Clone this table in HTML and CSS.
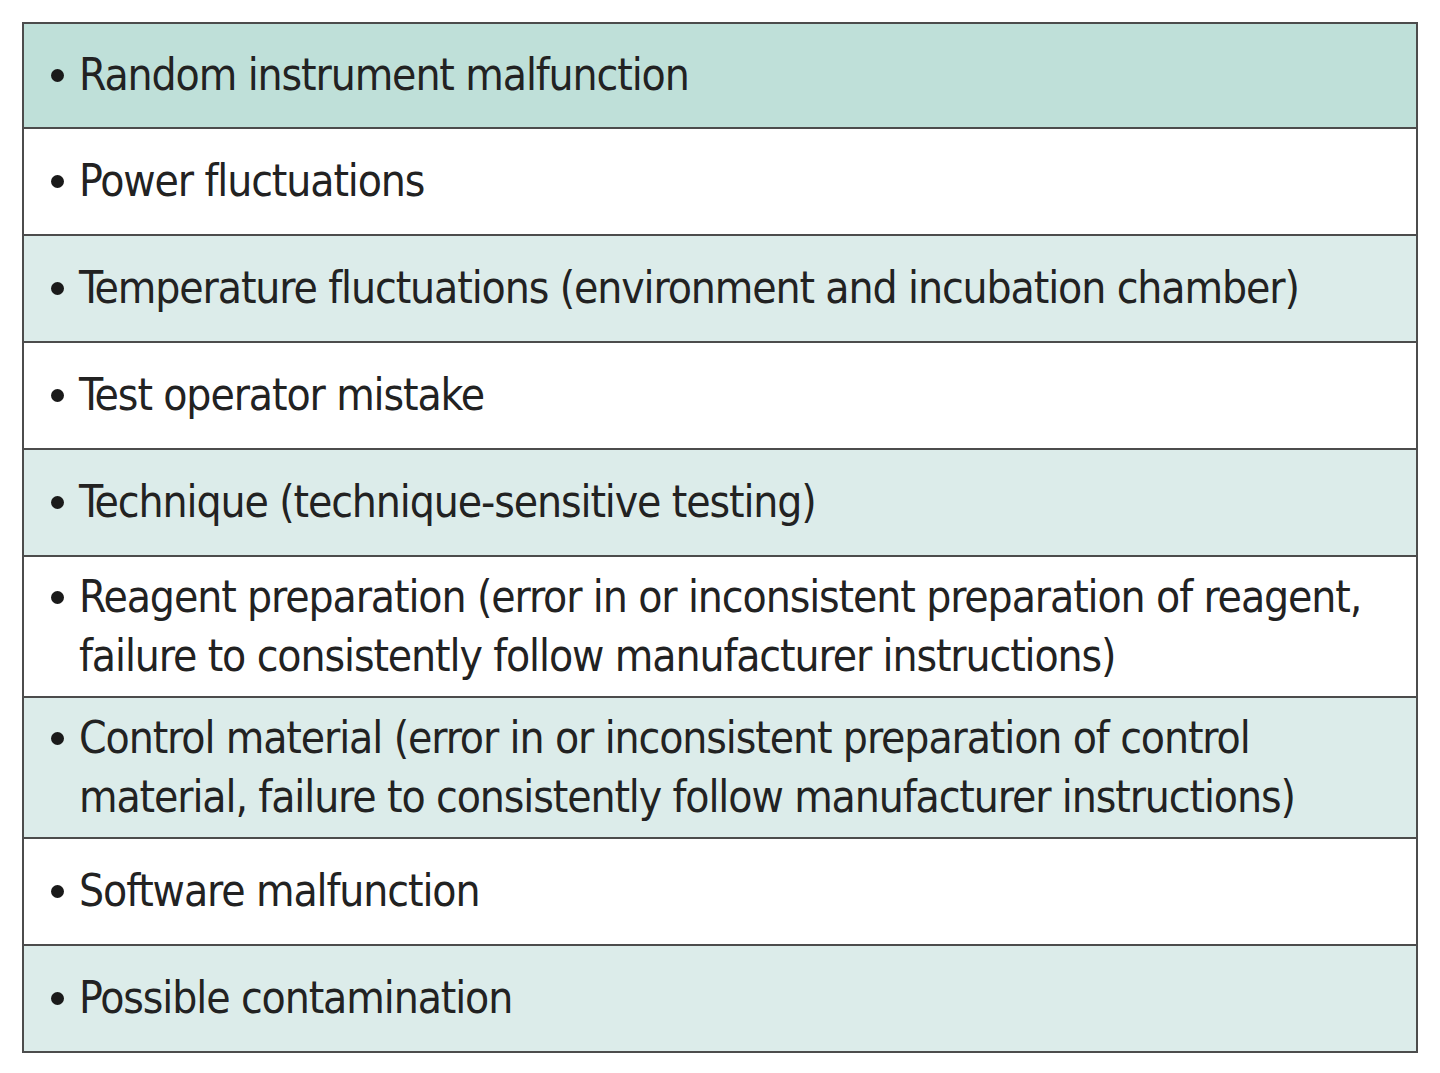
FILE: index.html
```html
<!DOCTYPE html>
<html lang="en">
<head>
<meta charset="utf-8">
<title>Sources of error</title>
<link rel="stylesheet" href="styles.css">
</head>
<body>
<div class="table">
  <div class="row row-head"><div class="item"><span class="bullet"></span><span class="text">Random instrument malfunction</span></div></div>
  <div class="row row-white"><div class="item"><span class="bullet"></span><span class="text">Power fluctuations</span></div></div>
  <div class="row row-tint"><div class="item"><span class="bullet"></span><span class="text">Temperature fluctuations (environment and incubation chamber)</span></div></div>
  <div class="row row-white"><div class="item"><span class="bullet"></span><span class="text">Test operator mistake</span></div></div>
  <div class="row row-tint"><div class="item"><span class="bullet"></span><span class="text">Technique (technique-sensitive testing)</span></div></div>
  <div class="row row-white row-double"><div class="item"><span class="bullet"></span><span class="text">Reagent preparation (error in or inconsistent preparation of reagent,<br>failure to consistently follow manufacturer instructions)</span></div></div>
  <div class="row row-tint row-double"><div class="item"><span class="bullet"></span><span class="text">Control material (error in or inconsistent preparation of control<br>material, failure to consistently follow manufacturer instructions)</span></div></div>
  <div class="row row-white"><div class="item"><span class="bullet"></span><span class="text">Software malfunction</span></div></div>
  <div class="row row-tint"><div class="item"><span class="bullet"></span><span class="text">Possible contamination</span></div></div>
</div>
</body>
</html>
```
FILE: styles.css
```css
html, body {
  margin: 0;
  padding: 0;
  background: #ffffff;
}
body {
  padding: 22px 0 0 22px;
  font-family: "DejaVu Sans Condensed", "DejaVu Sans", "Liberation Sans", Arial, sans-serif;
  font-stretch: condensed;
  color: #222222;
}
.table {
  width: 1396px;
  border: 2px solid #4c4c4c;
  box-sizing: border-box;
  display: flex;
  flex-direction: column;
}
.row {
  display: flex;
  align-items: center;
  min-height: 107px;
  padding: 0 0 2px 27px;
  box-sizing: border-box;
  border-top: 2px solid #4c4c4c;
  font-size: 44px;
  line-height: 59px;
  letter-spacing: -1.1px;
}
.row:first-child {
  border-top: none;
  min-height: 103px;
}
.row-double {
  min-height: 141px;
}
.row-head { background: #bfe0d9; }
.row-tint { background: #dcecea; }
.row-white { background: #ffffff; }
.item {
  display: flex;
  align-items: flex-start;
}
.bullet {
  flex: none;
  width: 13px;
  height: 13px;
  border-radius: 50%;
  background: #1a1a1a;
  margin: 24px 15px 0 0;
}
.text {
  white-space: nowrap;
}
```
